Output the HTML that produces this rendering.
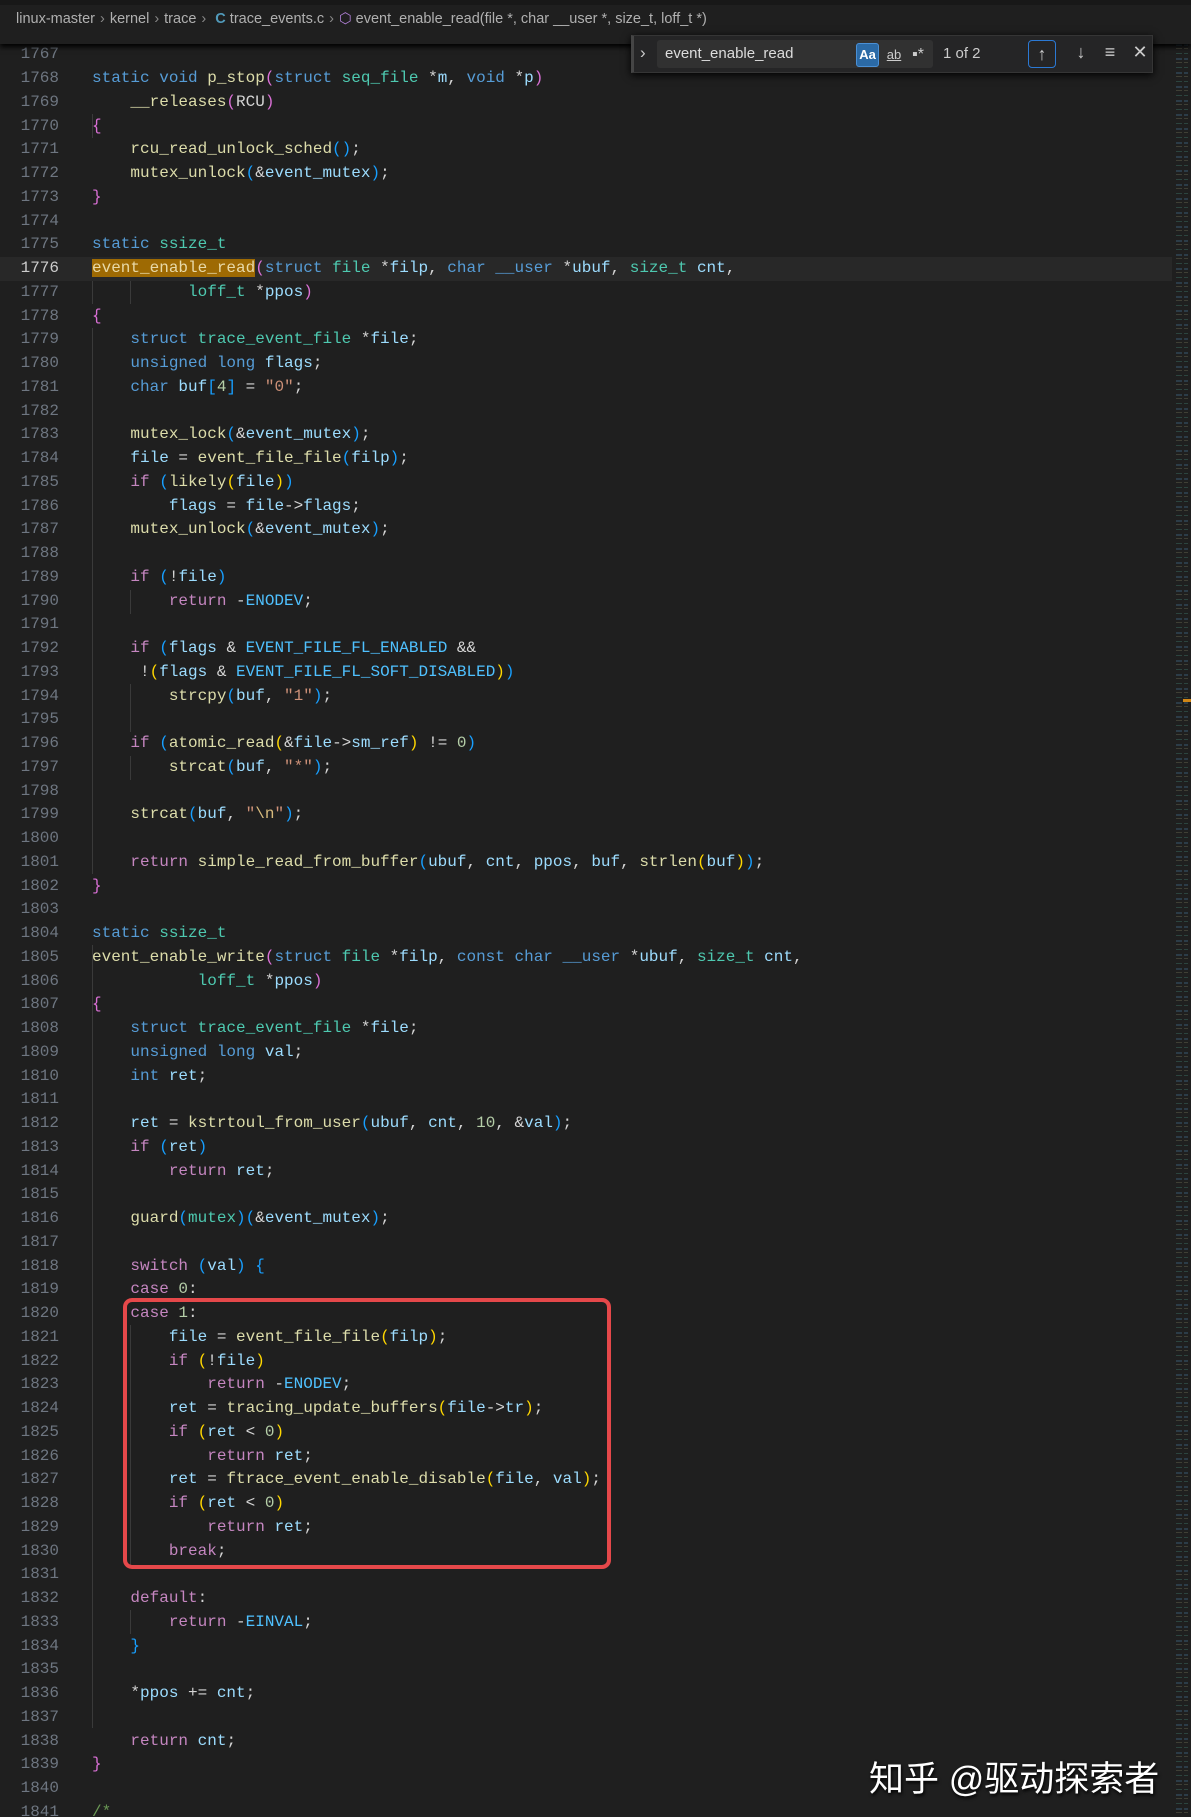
<!DOCTYPE html>
<html><head><meta charset="utf-8"><style>
*{margin:0;padding:0;box-sizing:border-box}
html,body{width:1191px;height:1817px;overflow:hidden;background:#1f1f1f}
body{position:relative;font-family:"Liberation Mono",monospace;font-size:16px;color:#d4d4d4}
#code{position:absolute;left:0;top:19.6px;width:1191px}
.l{height:23.75px;line-height:23.75px;white-space:pre;position:relative}
.n{position:absolute;left:0;width:59px;text-align:right;color:#6e7681}
.c0{position:absolute;left:92px}
.cur{background:#282828;}
.cur .n{color:#cccccc}
.k{color:#569cd6}.c{color:#c586c0}.t{color:#4ec9b0}.f{color:#dcdcaa}.v{color:#9cdcfe}
.m{color:#4fc1ff}.s{color:#ce9178}.nm{color:#b5cea8}.e{color:#d7ba7d}.cm{color:#6a9955}
.p{color:#da70d6}.u{color:#179fff}.g{color:#ffd700}
.hl{background:#9e6a03;color:#e8d9a8}
#hdr{position:absolute;left:0;top:0;width:1191px;height:44px;background:#1f1f1f;box-shadow:0 3px 5px #000;z-index:5;font-family:"Liberation Sans",sans-serif;font-size:14.5px;color:#b0b0b0}
#tabs{height:5px;background:#181818}
#bc{position:absolute;left:16px;top:11px;white-space:nowrap}
#bc .sep{color:#888;margin:0 5px}
#find{position:absolute;left:631px;top:35px;width:522px;height:38px;background:#252526;border:1px solid #353535;box-shadow:0 2px 8px #000;z-index:6;font-family:"Liberation Sans",sans-serif;color:#ccc;border-left:3px solid #454545}
#inp{position:absolute;left:23px;top:4px;width:276px;height:28px;background:#313131;border-radius:3px;font-size:15px;line-height:28px;padding-left:8px;color:#ddd}
.ib{position:absolute;top:8px;height:22px;font-size:13px;line-height:22px;text-align:center}
.guide{position:absolute;width:1px;background:#3a3a3a}
#mini{position:absolute;left:1172px;top:44px;width:19px;height:1773px;background:#1f1f1f}
#box{position:absolute;left:123px;top:1298px;width:488px;height:271px;border:4px solid #e5484a;border-radius:9px;z-index:3}
#wm{position:absolute;left:869px;top:1751px;font-family:"Liberation Sans","Noto Sans CJK SC",sans-serif;font-size:35px;color:#fff;text-shadow:1px 2px 3px #000;z-index:4;white-space:nowrap}
</style></head><body>
<div id="hdr"><div id="tabs"></div>
<div id="bc">linux-master<span class="sep">›</span>kernel<span class="sep">›</span>trace<span class="sep">›</span> <span style="color:#519aba;font-weight:bold">C</span> trace_events.c<span class="sep">›</span><span style="color:#b180d7">⬡</span> event_enable_read(file *, char __user *, size_t, loff_t *)</div>
</div>
<div id="find">
<span style="position:absolute;left:6px;top:7px;font-size:17px;color:#ccc">›</span>
<div id="inp">event_enable_read</div>
<div class="ib" style="left:222px;width:23px;background:#2b6aa6;border:1px solid #4a90d6;border-radius:3px;color:#fff;top:7px;height:24px;line-height:22px;font-weight:bold">Aa</div>
<div class="ib" style="left:249px;width:22px;text-decoration:underline">ab</div>
<div class="ib" style="left:275px;width:18px;font-size:16px">▪*</div>
<div style="position:absolute;left:309px;top:9px;font-size:15px">1 of 2</div>
<div class="ib" style="left:394px;width:28px;height:28px;top:4px;border:1px solid #2b79d4;border-radius:4px;font-size:18px;line-height:26px">↑</div>
<div class="ib" style="left:437px;width:20px;font-size:18px;top:5px">↓</div>
<div class="ib" style="left:466px;width:20px;font-size:18px;top:5px">≡</div>
<div class="ib" style="left:496px;width:20px;font-size:18px;top:5px">✕</div>
</div>
<div class="guide" style="left:92px;top:114px;height:24px"></div>
<div class="guide" style="left:92px;top:281px;height:23px"></div>
<div class="guide" style="left:130px;top:281px;height:23px"></div>
<div class="guide" style="left:92px;top:328px;height:546px"></div>
<div class="guide" style="left:130px;top:590px;height:24px"></div>
<div class="guide" style="left:130px;top:684px;height:48px"></div>
<div class="guide" style="left:130px;top:756px;height:24px"></div>
<div class="guide" style="left:92px;top:945px;height:783px"></div>
<div class="guide" style="left:130px;top:1325px;height:240px"></div>
<div class="guide" style="left:130px;top:1610px;height:24px"></div>
<div id="code">
<div class="l"><span class="n">1766</span><span class="c0">    <span class="f">__acquires</span><span class="p">(</span>RCU<span class="p">)</span></span></div>
<div class="l"><span class="n">1767</span></div>
<div class="l"><span class="n">1768</span><span class="c0"><span class="k">static</span> <span class="k">void</span> <span class="f">p_stop</span><span class="p">(</span><span class="k">struct</span> <span class="t">seq_file</span> *<span class="v">m</span>, <span class="k">void</span> *<span class="v">p</span><span class="p">)</span></span></div>
<div class="l"><span class="n">1769</span><span class="c0">    <span class="f">__releases</span><span class="p">(</span>RCU<span class="p">)</span></span></div>
<div class="l"><span class="n">1770</span><span class="c0"><span class="p">{</span></span></div>
<div class="l"><span class="n">1771</span><span class="c0">    <span class="f">rcu_read_unlock_sched</span><span class="u">()</span>;</span></div>
<div class="l"><span class="n">1772</span><span class="c0">    <span class="f">mutex_unlock</span><span class="u">(</span>&amp;<span class="v">event_mutex</span><span class="u">)</span>;</span></div>
<div class="l"><span class="n">1773</span><span class="c0"><span class="p">}</span></span></div>
<div class="l"><span class="n">1774</span></div>
<div class="l"><span class="n">1775</span><span class="c0"><span class="k">static</span> <span class="t">ssize_t</span></span></div>
<div class="l cur"><span class="n">1776</span><span class="c0"><span class="hl">event_enable_read</span><span class="p">(</span><span class="k">struct</span> <span class="t">file</span> *<span class="v">filp</span>, <span class="k">char</span> <span class="k">__user</span> *<span class="v">ubuf</span>, <span class="t">size_t</span> <span class="v">cnt</span>,</span></div>
<div class="l"><span class="n">1777</span><span class="c0">          <span class="t">loff_t</span> *<span class="v">ppos</span><span class="p">)</span></span></div>
<div class="l"><span class="n">1778</span><span class="c0"><span class="p">{</span></span></div>
<div class="l"><span class="n">1779</span><span class="c0">    <span class="k">struct</span> <span class="t">trace_event_file</span> *<span class="v">file</span>;</span></div>
<div class="l"><span class="n">1780</span><span class="c0">    <span class="k">unsigned</span> <span class="k">long</span> <span class="v">flags</span>;</span></div>
<div class="l"><span class="n">1781</span><span class="c0">    <span class="k">char</span> <span class="v">buf</span><span class="u">[</span><span class="nm">4</span><span class="u">]</span> = <span class="s">"0"</span>;</span></div>
<div class="l"><span class="n">1782</span></div>
<div class="l"><span class="n">1783</span><span class="c0">    <span class="f">mutex_lock</span><span class="u">(</span>&amp;<span class="v">event_mutex</span><span class="u">)</span>;</span></div>
<div class="l"><span class="n">1784</span><span class="c0">    <span class="v">file</span> = <span class="f">event_file_file</span><span class="u">(</span><span class="v">filp</span><span class="u">)</span>;</span></div>
<div class="l"><span class="n">1785</span><span class="c0">    <span class="c">if</span> <span class="u">(</span><span class="f">likely</span><span class="g">(</span><span class="v">file</span><span class="g">)</span><span class="u">)</span></span></div>
<div class="l"><span class="n">1786</span><span class="c0">        <span class="v">flags</span> = <span class="v">file</span>-&gt;<span class="v">flags</span>;</span></div>
<div class="l"><span class="n">1787</span><span class="c0">    <span class="f">mutex_unlock</span><span class="u">(</span>&amp;<span class="v">event_mutex</span><span class="u">)</span>;</span></div>
<div class="l"><span class="n">1788</span></div>
<div class="l"><span class="n">1789</span><span class="c0">    <span class="c">if</span> <span class="u">(</span>!<span class="v">file</span><span class="u">)</span></span></div>
<div class="l"><span class="n">1790</span><span class="c0">        <span class="c">return</span> -<span class="m">ENODEV</span>;</span></div>
<div class="l"><span class="n">1791</span></div>
<div class="l"><span class="n">1792</span><span class="c0">    <span class="c">if</span> <span class="u">(</span><span class="v">flags</span> &amp; <span class="m">EVENT_FILE_FL_ENABLED</span> &amp;&amp;</span></div>
<div class="l"><span class="n">1793</span><span class="c0">     !<span class="g">(</span><span class="v">flags</span> &amp; <span class="m">EVENT_FILE_FL_SOFT_DISABLED</span><span class="g">)</span><span class="u">)</span></span></div>
<div class="l"><span class="n">1794</span><span class="c0">        <span class="f">strcpy</span><span class="u">(</span><span class="v">buf</span>, <span class="s">"1"</span><span class="u">)</span>;</span></div>
<div class="l"><span class="n">1795</span></div>
<div class="l"><span class="n">1796</span><span class="c0">    <span class="c">if</span> <span class="u">(</span><span class="f">atomic_read</span><span class="g">(</span>&amp;<span class="v">file</span>-&gt;<span class="v">sm_ref</span><span class="g">)</span> != <span class="nm">0</span><span class="u">)</span></span></div>
<div class="l"><span class="n">1797</span><span class="c0">        <span class="f">strcat</span><span class="u">(</span><span class="v">buf</span>, <span class="s">"*"</span><span class="u">)</span>;</span></div>
<div class="l"><span class="n">1798</span></div>
<div class="l"><span class="n">1799</span><span class="c0">    <span class="f">strcat</span><span class="u">(</span><span class="v">buf</span>, <span class="s">"<span class="e">\n</span>"</span><span class="u">)</span>;</span></div>
<div class="l"><span class="n">1800</span></div>
<div class="l"><span class="n">1801</span><span class="c0">    <span class="c">return</span> <span class="f">simple_read_from_buffer</span><span class="u">(</span><span class="v">ubuf</span>, <span class="v">cnt</span>, <span class="v">ppos</span>, <span class="v">buf</span>, <span class="f">strlen</span><span class="g">(</span><span class="v">buf</span><span class="g">)</span><span class="u">)</span>;</span></div>
<div class="l"><span class="n">1802</span><span class="c0"><span class="p">}</span></span></div>
<div class="l"><span class="n">1803</span></div>
<div class="l"><span class="n">1804</span><span class="c0"><span class="k">static</span> <span class="t">ssize_t</span></span></div>
<div class="l"><span class="n">1805</span><span class="c0"><span class="f">event_enable_write</span><span class="p">(</span><span class="k">struct</span> <span class="t">file</span> *<span class="v">filp</span>, <span class="k">const</span> <span class="k">char</span> <span class="k">__user</span> *<span class="v">ubuf</span>, <span class="t">size_t</span> <span class="v">cnt</span>,</span></div>
<div class="l"><span class="n">1806</span><span class="c0">           <span class="t">loff_t</span> *<span class="v">ppos</span><span class="p">)</span></span></div>
<div class="l"><span class="n">1807</span><span class="c0"><span class="p">{</span></span></div>
<div class="l"><span class="n">1808</span><span class="c0">    <span class="k">struct</span> <span class="t">trace_event_file</span> *<span class="v">file</span>;</span></div>
<div class="l"><span class="n">1809</span><span class="c0">    <span class="k">unsigned</span> <span class="k">long</span> <span class="v">val</span>;</span></div>
<div class="l"><span class="n">1810</span><span class="c0">    <span class="k">int</span> <span class="v">ret</span>;</span></div>
<div class="l"><span class="n">1811</span></div>
<div class="l"><span class="n">1812</span><span class="c0">    <span class="v">ret</span> = <span class="f">kstrtoul_from_user</span><span class="u">(</span><span class="v">ubuf</span>, <span class="v">cnt</span>, <span class="nm">10</span>, &amp;<span class="v">val</span><span class="u">)</span>;</span></div>
<div class="l"><span class="n">1813</span><span class="c0">    <span class="c">if</span> <span class="u">(</span><span class="v">ret</span><span class="u">)</span></span></div>
<div class="l"><span class="n">1814</span><span class="c0">        <span class="c">return</span> <span class="v">ret</span>;</span></div>
<div class="l"><span class="n">1815</span></div>
<div class="l"><span class="n">1816</span><span class="c0">    <span class="f">guard</span><span class="u">(</span><span class="t">mutex</span><span class="u">)(</span>&amp;<span class="v">event_mutex</span><span class="u">)</span>;</span></div>
<div class="l"><span class="n">1817</span></div>
<div class="l"><span class="n">1818</span><span class="c0">    <span class="c">switch</span> <span class="u">(</span><span class="v">val</span><span class="u">)</span> <span class="u">{</span></span></div>
<div class="l"><span class="n">1819</span><span class="c0">    <span class="c">case</span> <span class="nm">0</span>:</span></div>
<div class="l"><span class="n">1820</span><span class="c0">    <span class="c">case</span> <span class="nm">1</span>:</span></div>
<div class="l"><span class="n">1821</span><span class="c0">        <span class="v">file</span> = <span class="f">event_file_file</span><span class="g">(</span><span class="v">filp</span><span class="g">)</span>;</span></div>
<div class="l"><span class="n">1822</span><span class="c0">        <span class="c">if</span> <span class="g">(</span>!<span class="v">file</span><span class="g">)</span></span></div>
<div class="l"><span class="n">1823</span><span class="c0">            <span class="c">return</span> -<span class="m">ENODEV</span>;</span></div>
<div class="l"><span class="n">1824</span><span class="c0">        <span class="v">ret</span> = <span class="f">tracing_update_buffers</span><span class="g">(</span><span class="v">file</span>-&gt;<span class="v">tr</span><span class="g">)</span>;</span></div>
<div class="l"><span class="n">1825</span><span class="c0">        <span class="c">if</span> <span class="g">(</span><span class="v">ret</span> &lt; <span class="nm">0</span><span class="g">)</span></span></div>
<div class="l"><span class="n">1826</span><span class="c0">            <span class="c">return</span> <span class="v">ret</span>;</span></div>
<div class="l"><span class="n">1827</span><span class="c0">        <span class="v">ret</span> = <span class="f">ftrace_event_enable_disable</span><span class="g">(</span><span class="v">file</span>, <span class="v">val</span><span class="g">)</span>;</span></div>
<div class="l"><span class="n">1828</span><span class="c0">        <span class="c">if</span> <span class="g">(</span><span class="v">ret</span> &lt; <span class="nm">0</span><span class="g">)</span></span></div>
<div class="l"><span class="n">1829</span><span class="c0">            <span class="c">return</span> <span class="v">ret</span>;</span></div>
<div class="l"><span class="n">1830</span><span class="c0">        <span class="c">break</span>;</span></div>
<div class="l"><span class="n">1831</span></div>
<div class="l"><span class="n">1832</span><span class="c0">    <span class="c">default</span>:</span></div>
<div class="l"><span class="n">1833</span><span class="c0">        <span class="c">return</span> -<span class="m">EINVAL</span>;</span></div>
<div class="l"><span class="n">1834</span><span class="c0">    <span class="u">}</span></span></div>
<div class="l"><span class="n">1835</span></div>
<div class="l"><span class="n">1836</span><span class="c0">    *<span class="v">ppos</span> += <span class="v">cnt</span>;</span></div>
<div class="l"><span class="n">1837</span></div>
<div class="l"><span class="n">1838</span><span class="c0">    <span class="c">return</span> <span class="v">cnt</span>;</span></div>
<div class="l"><span class="n">1839</span><span class="c0"><span class="p">}</span></span></div>
<div class="l"><span class="n">1840</span></div>
<div class="l"><span class="n">1841</span><span class="c0"><span class="cm">/*</span></span></div>
</div>
<div id="mini">
<div style="position:absolute;left:4px;top:0;width:14px;height:1773px;opacity:.3;background:repeating-linear-gradient(180deg,#4a7fa8 0 2px,transparent 2px 4px,#8a8a6a 4px 5px,transparent 5px 9px,#4a9a8a 9px 10px,transparent 10px 14px);-webkit-mask:repeating-linear-gradient(90deg,#000 0 6px,transparent 6px 8px,#000 8px 12px,transparent 12px 14px)"></div>
<div style="position:absolute;left:11px;top:655px;width:8px;height:3px;background:#d18616"></div>
</div>
<div id="box"></div>
<div id="wm">知乎 @驱动探索者</div>
</body></html>
